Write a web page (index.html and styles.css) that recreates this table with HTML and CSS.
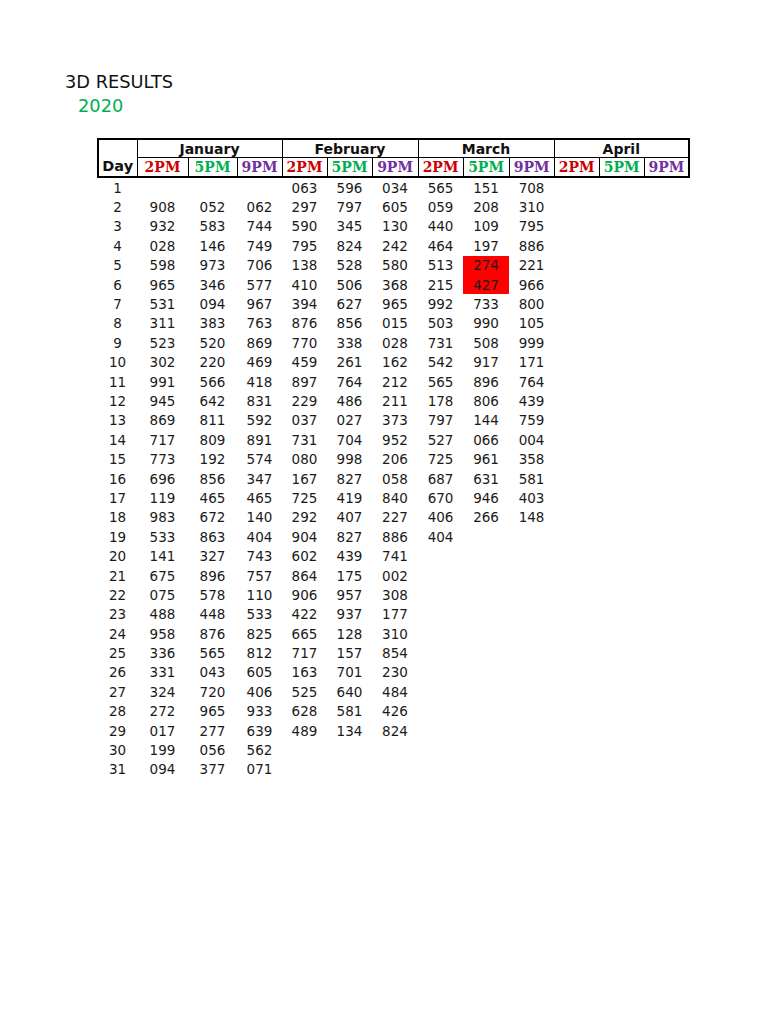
FILE: index.html
```html
<!DOCTYPE html>
<html>
<head>
<meta charset="utf-8">
<title>3D Results 2020</title>
<link rel="stylesheet" href="styles.css">
</head>
<body>
<div class="page">
  <div class="title">
    <div class="heading">3D RESULTS</div>
    <div class="year">2020</div>
  </div>
  <table class="results">
    <colgroup>
      <col class="c-day">
      <col class="c-j1"><col class="c-j2"><col class="c-j3">
      <col class="c-45"><col class="c-45"><col class="c-46">
      <col class="c-45"><col class="c-46"><col class="c-45">
      <col class="c-45"><col class="c-45"><col class="c-45">
    </colgroup>
    <thead>
      <tr class="months">
        <th class="day" rowspan="2">Day</th>
        <th colspan="3">January</th>
        <th colspan="3">February</th>
        <th colspan="3">March</th>
        <th colspan="3">April</th>
      </tr>
      <tr class="times">
        <th class="t2">2PM</th><th class="t5">5PM</th><th class="t9">9PM</th>
        <th class="t2">2PM</th><th class="t5">5PM</th><th class="t9">9PM</th>
        <th class="t2">2PM</th><th class="t5">5PM</th><th class="t9">9PM</th>
        <th class="t2">2PM</th><th class="t5">5PM</th><th class="t9">9PM</th>
      </tr>
    </thead>
    <tbody>
      <tr><td>1</td><td></td><td></td><td></td><td>063</td><td>596</td><td>034</td><td>565</td><td>151</td><td>708</td><td></td><td></td><td></td></tr>
      <tr><td>2</td><td>908</td><td>052</td><td>062</td><td>297</td><td>797</td><td>605</td><td>059</td><td>208</td><td>310</td><td></td><td></td><td></td></tr>
      <tr><td>3</td><td>932</td><td>583</td><td>744</td><td>590</td><td>345</td><td>130</td><td>440</td><td>109</td><td>795</td><td></td><td></td><td></td></tr>
      <tr><td>4</td><td>028</td><td>146</td><td>749</td><td>795</td><td>824</td><td>242</td><td>464</td><td>197</td><td>886</td><td></td><td></td><td></td></tr>
      <tr><td>5</td><td>598</td><td>973</td><td>706</td><td>138</td><td>528</td><td>580</td><td>513</td><td class="hit">274</td><td>221</td><td></td><td></td><td></td></tr>
      <tr><td>6</td><td>965</td><td>346</td><td>577</td><td>410</td><td>506</td><td>368</td><td>215</td><td class="hit">427</td><td>966</td><td></td><td></td><td></td></tr>
      <tr><td>7</td><td>531</td><td>094</td><td>967</td><td>394</td><td>627</td><td>965</td><td>992</td><td>733</td><td>800</td><td></td><td></td><td></td></tr>
      <tr><td>8</td><td>311</td><td>383</td><td>763</td><td>876</td><td>856</td><td>015</td><td>503</td><td>990</td><td>105</td><td></td><td></td><td></td></tr>
      <tr><td>9</td><td>523</td><td>520</td><td>869</td><td>770</td><td>338</td><td>028</td><td>731</td><td>508</td><td>999</td><td></td><td></td><td></td></tr>
      <tr><td>10</td><td>302</td><td>220</td><td>469</td><td>459</td><td>261</td><td>162</td><td>542</td><td>917</td><td>171</td><td></td><td></td><td></td></tr>
      <tr><td>11</td><td>991</td><td>566</td><td>418</td><td>897</td><td>764</td><td>212</td><td>565</td><td>896</td><td>764</td><td></td><td></td><td></td></tr>
      <tr><td>12</td><td>945</td><td>642</td><td>831</td><td>229</td><td>486</td><td>211</td><td>178</td><td>806</td><td>439</td><td></td><td></td><td></td></tr>
      <tr><td>13</td><td>869</td><td>811</td><td>592</td><td>037</td><td>027</td><td>373</td><td>797</td><td>144</td><td>759</td><td></td><td></td><td></td></tr>
      <tr><td>14</td><td>717</td><td>809</td><td>891</td><td>731</td><td>704</td><td>952</td><td>527</td><td>066</td><td>004</td><td></td><td></td><td></td></tr>
      <tr><td>15</td><td>773</td><td>192</td><td>574</td><td>080</td><td>998</td><td>206</td><td>725</td><td>961</td><td>358</td><td></td><td></td><td></td></tr>
      <tr><td>16</td><td>696</td><td>856</td><td>347</td><td>167</td><td>827</td><td>058</td><td>687</td><td>631</td><td>581</td><td></td><td></td><td></td></tr>
      <tr><td>17</td><td>119</td><td>465</td><td>465</td><td>725</td><td>419</td><td>840</td><td>670</td><td>946</td><td>403</td><td></td><td></td><td></td></tr>
      <tr><td>18</td><td>983</td><td>672</td><td>140</td><td>292</td><td>407</td><td>227</td><td>406</td><td>266</td><td>148</td><td></td><td></td><td></td></tr>
      <tr><td>19</td><td>533</td><td>863</td><td>404</td><td>904</td><td>827</td><td>886</td><td>404</td><td></td><td></td><td></td><td></td><td></td></tr>
      <tr><td>20</td><td>141</td><td>327</td><td>743</td><td>602</td><td>439</td><td>741</td><td></td><td></td><td></td><td></td><td></td><td></td></tr>
      <tr><td>21</td><td>675</td><td>896</td><td>757</td><td>864</td><td>175</td><td>002</td><td></td><td></td><td></td><td></td><td></td><td></td></tr>
      <tr><td>22</td><td>075</td><td>578</td><td>110</td><td>906</td><td>957</td><td>308</td><td></td><td></td><td></td><td></td><td></td><td></td></tr>
      <tr><td>23</td><td>488</td><td>448</td><td>533</td><td>422</td><td>937</td><td>177</td><td></td><td></td><td></td><td></td><td></td><td></td></tr>
      <tr><td>24</td><td>958</td><td>876</td><td>825</td><td>665</td><td>128</td><td>310</td><td></td><td></td><td></td><td></td><td></td><td></td></tr>
      <tr><td>25</td><td>336</td><td>565</td><td>812</td><td>717</td><td>157</td><td>854</td><td></td><td></td><td></td><td></td><td></td><td></td></tr>
      <tr><td>26</td><td>331</td><td>043</td><td>605</td><td>163</td><td>701</td><td>230</td><td></td><td></td><td></td><td></td><td></td><td></td></tr>
      <tr><td>27</td><td>324</td><td>720</td><td>406</td><td>525</td><td>640</td><td>484</td><td></td><td></td><td></td><td></td><td></td><td></td></tr>
      <tr><td>28</td><td>272</td><td>965</td><td>933</td><td>628</td><td>581</td><td>426</td><td></td><td></td><td></td><td></td><td></td><td></td></tr>
      <tr><td>29</td><td>017</td><td>277</td><td>639</td><td>489</td><td>134</td><td>824</td><td></td><td></td><td></td><td></td><td></td><td></td></tr>
      <tr><td>30</td><td>199</td><td>056</td><td>562</td><td></td><td></td><td></td><td></td><td></td><td></td><td></td><td></td><td></td></tr>
      <tr><td>31</td><td>094</td><td>377</td><td>071</td><td></td><td></td><td></td><td></td><td></td><td></td><td></td><td></td><td></td></tr>
    </tbody>
  </table>
</div>
</body>
</html>
```
FILE: styles.css
```css
html, body {
  margin: 0;
  padding: 0;
  background: #ffffff;
}

.page {
  padding: 70px 0 0 97px;
  font-family: "DejaVu Sans", sans-serif;
  color: #111111;
}

.title {
  margin-left: -32px;
  font-size: 17.8px;
  line-height: 24px;
  margin-bottom: 20px;
}

.heading {
  color: #111111;
}

.year {
  color: #00b050;
  padding-left: 13px;
}

.results {
  border-collapse: collapse;
  table-layout: fixed;
  width: 592px;
}

.c-day { width: 39px; }
.c-j1 { width: 51px; }
.c-j2 { width: 49px; }
.c-j3 { width: 45px; }
.c-45 { width: 45px; }
.c-46 { width: 46px; }

.results th {
  padding: 0;
  font-weight: bold;
  text-align: center;
  border: 1px solid #000000;
}

.results th:last-child {
  border-right: 2px solid #000000;
}

.months th {
  height: 17px;
  font-size: 14px;
  line-height: 16px;
  color: #111111;
  border-top: 2px solid #000000;
}

.results th.day {
  vertical-align: bottom;
  font-size: 14.5px;
  line-height: 20px;
  border-left: 2px solid #000000;
  border-bottom: 2px solid #000000;
}

.times th {
  height: 18px;
  font-family: "DejaVu Serif", serif;
  font-size: 14px;
  line-height: 17px;
  border-bottom: 2px solid #000000;
}

.t2 { color: #cc0000; }
.t5 { color: #00b050; }
.t9 { color: #7030a0; }

.results td {
  padding: 0;
  height: 19.4px;
  font-size: 13.5px;
  line-height: 16px;
  text-align: center;
  color: #1a1a1a;
}

.results td.hit {
  background: #ff0000;
}
```
